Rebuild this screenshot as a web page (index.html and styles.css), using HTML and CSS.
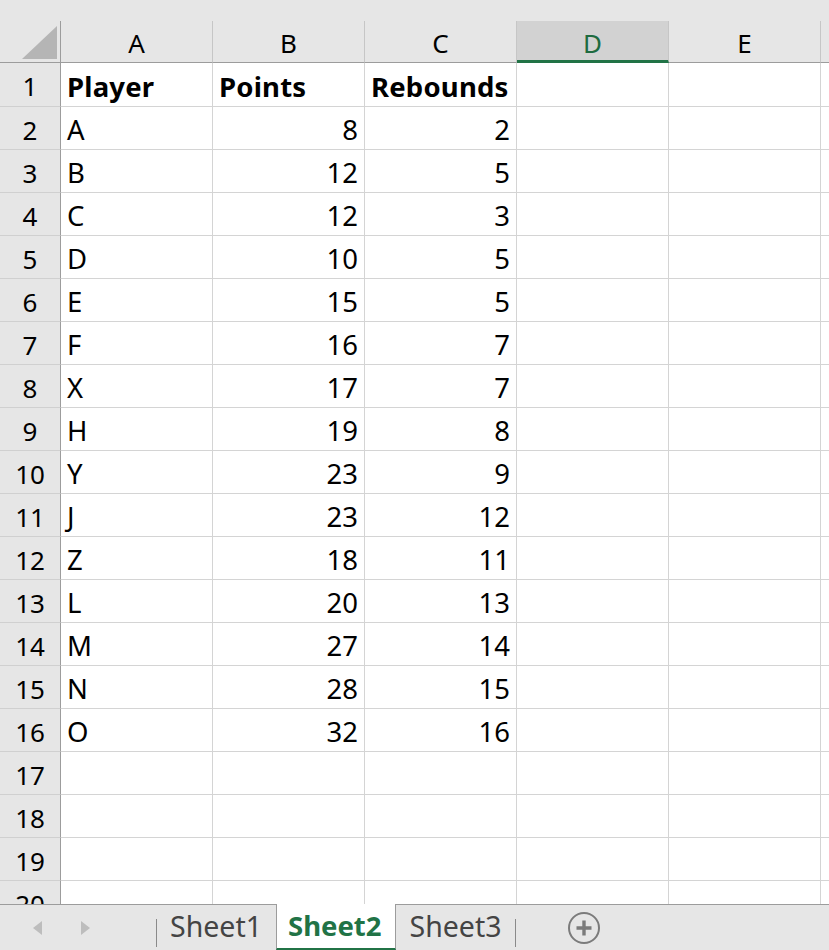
FILE: index.html
```html
<!DOCTYPE html>
<html lang="en">
<head>
<meta charset="utf-8">
<title>Sheet2</title>
<link rel="stylesheet" href="styles.css">
</head>
<body>
<div class="app">
  <div class="top-strip"></div>
  <div class="sheet">
    <div class="grid">
      <div class="corner"><span class="corner-tri"></span></div>
      <div class="col-head">A</div>
      <div class="col-head">B</div>
      <div class="col-head">C</div>
      <div class="col-head selected">D</div>
      <div class="col-head">E</div>
      <div class="col-head last"></div>

      <div class="row-head">1</div><div class="cell bold">Player</div><div class="cell bold">Points</div><div class="cell bold">Rebounds</div><div class="cell"></div><div class="cell"></div><div class="cell"></div>
      <div class="row-head">2</div><div class="cell">A</div><div class="cell num">8</div><div class="cell num">2</div><div class="cell"></div><div class="cell"></div><div class="cell"></div>
      <div class="row-head">3</div><div class="cell">B</div><div class="cell num">12</div><div class="cell num">5</div><div class="cell"></div><div class="cell"></div><div class="cell"></div>
      <div class="row-head">4</div><div class="cell">C</div><div class="cell num">12</div><div class="cell num">3</div><div class="cell"></div><div class="cell"></div><div class="cell"></div>
      <div class="row-head">5</div><div class="cell">D</div><div class="cell num">10</div><div class="cell num">5</div><div class="cell"></div><div class="cell"></div><div class="cell"></div>
      <div class="row-head">6</div><div class="cell">E</div><div class="cell num">15</div><div class="cell num">5</div><div class="cell"></div><div class="cell"></div><div class="cell"></div>
      <div class="row-head">7</div><div class="cell">F</div><div class="cell num">16</div><div class="cell num">7</div><div class="cell"></div><div class="cell"></div><div class="cell"></div>
      <div class="row-head">8</div><div class="cell">X</div><div class="cell num">17</div><div class="cell num">7</div><div class="cell"></div><div class="cell"></div><div class="cell"></div>
      <div class="row-head">9</div><div class="cell">H</div><div class="cell num">19</div><div class="cell num">8</div><div class="cell"></div><div class="cell"></div><div class="cell"></div>
      <div class="row-head">10</div><div class="cell">Y</div><div class="cell num">23</div><div class="cell num">9</div><div class="cell"></div><div class="cell"></div><div class="cell"></div>
      <div class="row-head">11</div><div class="cell">J</div><div class="cell num">23</div><div class="cell num">12</div><div class="cell"></div><div class="cell"></div><div class="cell"></div>
      <div class="row-head">12</div><div class="cell">Z</div><div class="cell num">18</div><div class="cell num">11</div><div class="cell"></div><div class="cell"></div><div class="cell"></div>
      <div class="row-head">13</div><div class="cell">L</div><div class="cell num">20</div><div class="cell num">13</div><div class="cell"></div><div class="cell"></div><div class="cell"></div>
      <div class="row-head">14</div><div class="cell">M</div><div class="cell num">27</div><div class="cell num">14</div><div class="cell"></div><div class="cell"></div><div class="cell"></div>
      <div class="row-head">15</div><div class="cell">N</div><div class="cell num">28</div><div class="cell num">15</div><div class="cell"></div><div class="cell"></div><div class="cell"></div>
      <div class="row-head">16</div><div class="cell">O</div><div class="cell num">32</div><div class="cell num">16</div><div class="cell"></div><div class="cell"></div><div class="cell"></div>
      <div class="row-head">17</div><div class="cell"></div><div class="cell"></div><div class="cell"></div><div class="cell"></div><div class="cell"></div><div class="cell"></div>
      <div class="row-head">18</div><div class="cell"></div><div class="cell"></div><div class="cell"></div><div class="cell"></div><div class="cell"></div><div class="cell"></div>
      <div class="row-head">19</div><div class="cell"></div><div class="cell"></div><div class="cell"></div><div class="cell"></div><div class="cell"></div><div class="cell"></div>
      <div class="row-head">20</div><div class="cell"></div><div class="cell"></div><div class="cell"></div><div class="cell"></div><div class="cell"></div><div class="cell"></div>
    </div>
  </div>
  <div class="tabbar">
    <div class="nav">
      <svg class="arrow" width="10" height="14" viewBox="0 0 10 14"><path d="M9 0 L0 7 L9 14 Z" fill="#bdbdbd"/></svg>
      <svg class="arrow" width="10" height="14" viewBox="0 0 10 14"><path d="M1 0 L10 7 L1 14 Z" fill="#bdbdbd"/></svg>
    </div>
    <div class="tabs">
      <div class="tab">Sheet1</div>
      <div class="tab active">Sheet2</div>
      <div class="tab">Sheet3</div>
    </div>
    <div class="add">
      <svg width="34" height="34" viewBox="0 0 34 34">
        <circle cx="17" cy="17" r="15" fill="none" stroke="#7b7b7b" stroke-width="2"/>
        <path d="M17 9.5 V24.5 M9.5 17 H24.5" stroke="#7b7b7b" stroke-width="3.4"/>
      </svg>
    </div>
  </div>
</div>
</body>
</html>
```

FILE: styles.css
```css
html, body {
  margin: 0;
  padding: 0;
}

body {
  width: 829px;
  height: 950px;
  overflow: hidden;
  background: #e6e6e6;
  font-family: "Noto Sans", "Open Sans", sans-serif;
  color: #000;
}

.app {
  display: flex;
  flex-direction: column;
  height: 950px;
}

.top-strip {
  height: 21px;
  background: #e6e6e6;
  flex: none;
}

.sheet {
  height: 883px;
  overflow: hidden;
  background: #fff;
  flex: none;
}

.grid {
  display: grid;
  grid-template-columns: 61px repeat(5, 152px) 1fr;
  grid-template-rows: 42px 44px;
  grid-auto-rows: 43px;
}

/* header row */
.corner {
  background: #e6e6e6;
  border-right: 1px solid #9c9c9c;
  border-bottom: 1px solid #9c9c9c;
  position: relative;
}

.corner-tri {
  position: absolute;
  left: 22px;
  bottom: 3px;
  width: 0;
  height: 0;
  border-left: 35px solid transparent;
  border-bottom: 33px solid #b5b5b5;
}

.col-head {
  background: #e6e6e6;
  border-right: 1px solid #c6c6c6;
  border-bottom: 1px solid #9c9c9c;
  display: flex;
  align-items: center;
  justify-content: center;
  font-size: 26px;
  padding-top: 2px;
  box-sizing: border-box;
}

.col-head.selected {
  background: #d2d2d2;
  color: #1e6b40;
  border-bottom: 3px solid #217346;
  padding-top: 4px;
}

.col-head.last {
  border-right: none;
}

/* row numbers */
.row-head {
  background: #e6e6e6;
  border-right: 1px solid #9c9c9c;
  border-bottom: 1px solid #d0d0d0;
  display: flex;
  align-items: center;
  justify-content: center;
  font-size: 26px;
  padding-top: 3px;
  box-sizing: border-box;
}

/* cells */
.cell {
  border-right: 1px solid #d4d4d4;
  border-bottom: 1px solid #d4d4d4;
  display: flex;
  align-items: center;
  padding: 3px 6px 0 6px;
  font-size: 27.5px;
  white-space: nowrap;
  box-sizing: border-box;
  overflow: hidden;
}

.cell.bold {
  font-weight: 700;
  letter-spacing: 0.2px;
}

.cell.num {
  justify-content: flex-end;
}

/* sheet tabs */
.tabbar {
  flex: 1;
  display: flex;
  align-items: stretch;
  border-top: 1px solid #9c9c9c;
  background: #e6e6e6;
}

.nav {
  width: 156px;
  display: flex;
  align-items: center;
  gap: 37px;
  padding-left: 33px;
  box-sizing: border-box;
}

.tabs {
  display: flex;
  align-items: stretch;
}

.tab {
  display: flex;
  align-items: center;
  padding: 0 14px 3px 14px;
  font-size: 28.5px;
  color: #444;
  position: relative;
}

.tab::before {
  content: "";
  position: absolute;
  left: 0;
  top: 14px;
  bottom: 3px;
  border-left: 1px solid #8a8a8a;
}

.tab:last-child::after {
  content: "";
  position: absolute;
  right: 0;
  top: 14px;
  bottom: 3px;
  border-left: 1px solid #8a8a8a;
}

.tab.active {
  background: #fff;
  color: #217346;
  font-weight: 700;
  margin-top: -1px;
  border-left: 1px solid #9c9c9c;
  border-right: 1px solid #9c9c9c;
  border-bottom: 2px solid #217346;
  padding: 0 13px 1px 11px;
  font-size: 27.5px;
}

.tab.active::before {
  display: none;
}

.tab.active + .tab::before {
  display: none;
}

.add {
  display: flex;
  align-items: center;
  padding-left: 51px;
}
```
